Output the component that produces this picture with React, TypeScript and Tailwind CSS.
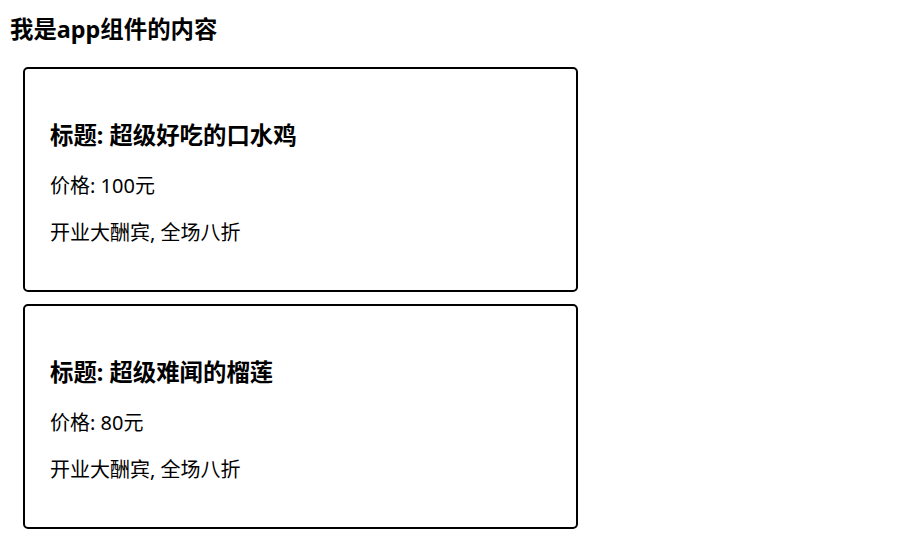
const foods = [
  { title: '超级好吃的口水鸡', price: 100, info: '开业大酬宾, 全场八折' },
  { title: '超级难闻的榴莲', price: 80, info: '开业大酬宾, 全场八折' },
];

function FoodCard({ title, price, info }: { title: string; price: number; info: string }) {
  return (
    <div className="h-[225px] w-[555px] rounded-[5px] border-2 border-black pl-[25px] pt-[50px]">
      <h3 className="text-[23.4px] font-bold leading-[32px]">标题: {title}</h3>
      <p className="mt-[21px] text-[20px] leading-[28px]">价格: {price}元</p>
      <p className="mt-[19px] text-[20px] leading-[28px]">{info}</p>
    </div>
  );
}

export default function App() {
  return (
    <div
      className="min-h-screen bg-white pl-[10px] pt-[15px] text-black"
      style={{ fontFamily: '"Noto Sans", "Noto Sans CJK SC", sans-serif' }}
    >
      <h2 className="text-[23.4px] font-bold leading-[28px]">我是app组件的内容</h2>
      <div className="ml-[13px] mt-[24px] flex flex-col gap-[12px]">
        {foods.map((f) => (
          <FoodCard key={f.title} {...f} />
        ))}
      </div>
    </div>
  );
}
